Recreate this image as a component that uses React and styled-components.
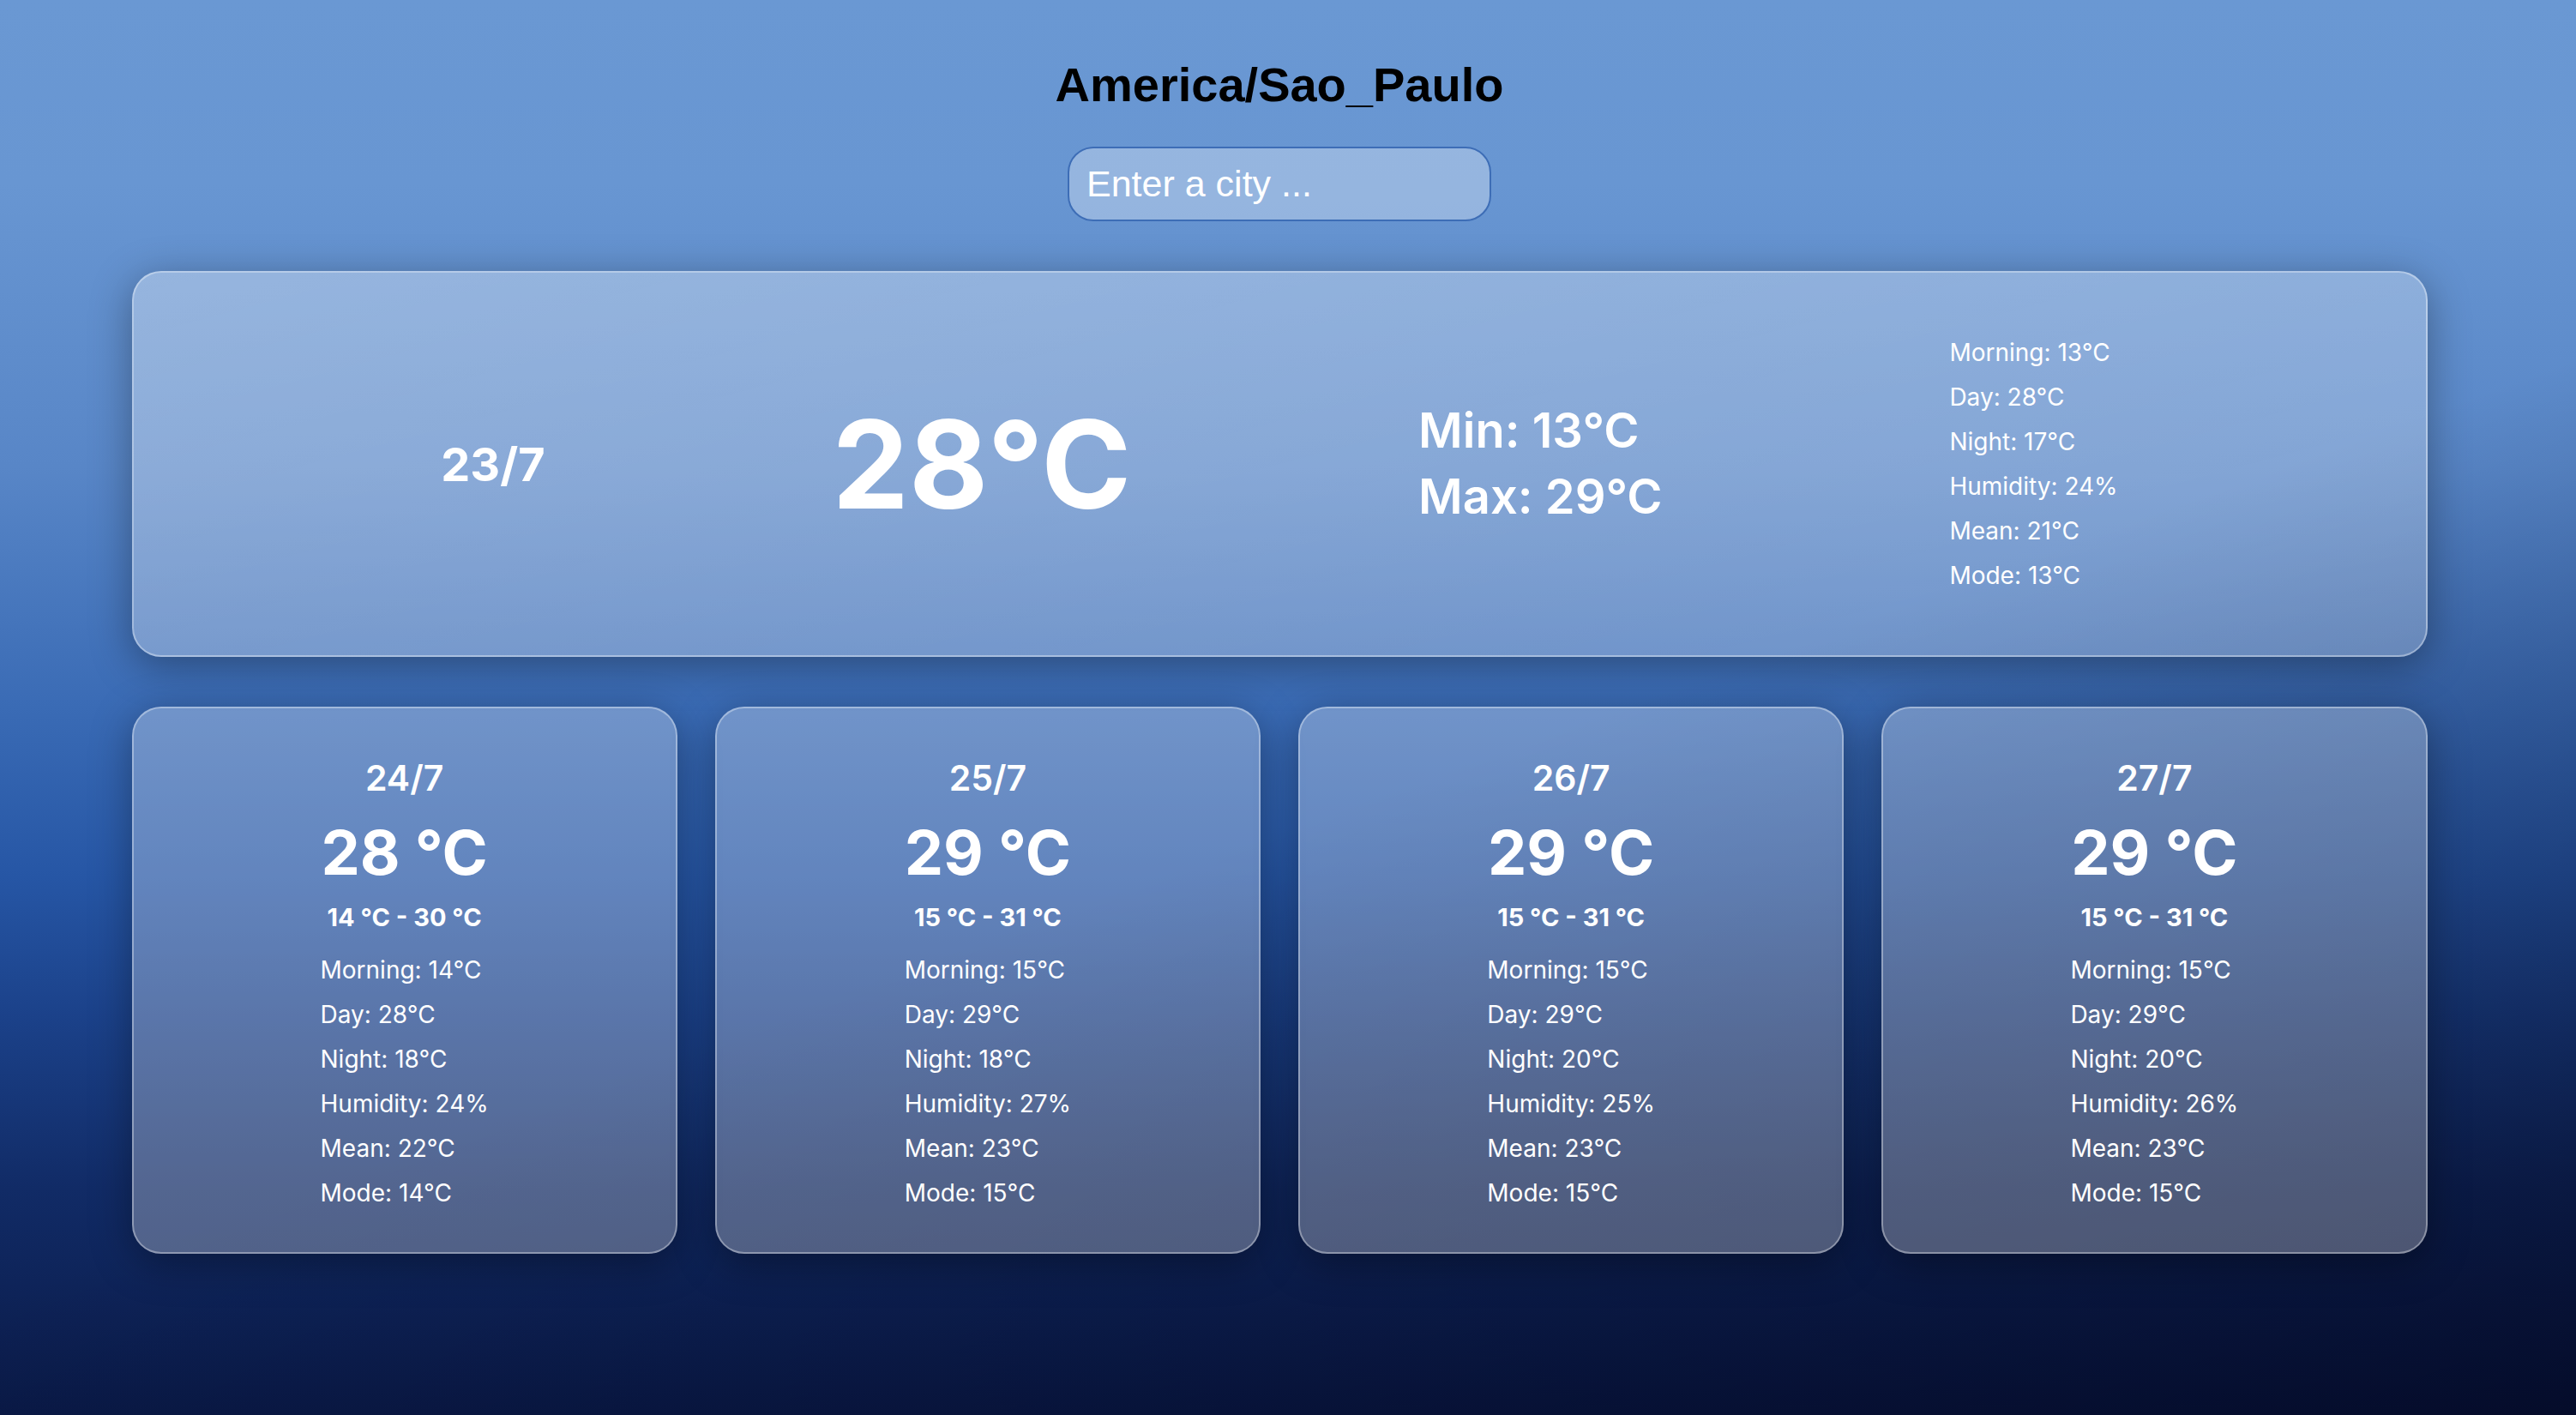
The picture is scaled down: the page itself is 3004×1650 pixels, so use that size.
import React from "react";
import styled, { createGlobalStyle } from "styled-components";

const GlobalStyle = createGlobalStyle`
    html, body {
        margin: 0;
        padding: 0;
    }
    body {
        min-height: 100vh;
        font-family: "Liberation Sans", Arial, sans-serif;
        background:
            linear-gradient(160deg, rgba(0, 0, 0, 0) 55%, rgba(0, 0, 18, 0.55) 100%),
            linear-gradient(180deg, #6a98d3 0%, #6896d2 13%, #5886c7 33%, #3a6bb5 50%, #2656a5 62%, #1b4189 72%, #112b66 84%, #0a1a48 100%);
    }
`;

const Page = styled.div`
    min-height: 100vh;
    padding-right: 20px;
    box-sizing: border-box;
`;

const Content = styled.div`
    width: 2677px;
    margin: 0 auto;
    display: flex;
    flex-direction: column;
    align-items: center;
    padding-bottom: 100px;
`;

const Title = styled.h1`
    margin: 67px 0 0;
    font-size: 56px;
    line-height: 64px;
    font-weight: 700;
    color: #000;
`;

const SearchInput = styled.input`
    margin-top: 40px;
    width: 494px;
    height: 87px;
    box-sizing: border-box;
    padding: 0 20px;
    border: 2px solid #3d6db6;
    border-radius: 30px;
    background: rgba(255, 255, 255, 0.3);
    font-family: "Liberation Sans", Arial, sans-serif;
    font-size: 43px;
    color: #fff;
    outline: none;
    &::placeholder {
        color: #fff;
    }
`;

const Glass = styled.div`
    box-sizing: border-box;
    border: 2px solid rgba(255, 255, 255, 0.35);
    border-radius: 34px;
    background: linear-gradient(165deg, rgba(255, 255, 255, 0.33) 0%, rgba(255, 255, 255, 0.24) 100%);
    box-shadow: 0 10px 48px rgba(0, 0, 0, 0.35);
    color: #fff;
    font-family: Inter, "Noto Sans", sans-serif;
`;

const TodayCard = styled(Glass)`
    margin-top: 58px;
    width: 100%;
    height: 450px;
    padding: 0 24px;
    display: flex;
    align-items: center;
    justify-content: space-evenly;
`;

const TodayDate = styled.div`
    font-size: 54px;
    font-weight: 700;
`;

const TodayTemp = styled.div`
    font-size: 142px;
    font-weight: 700;
    line-height: 1;
`;

const MinMax = styled.div`
    font-size: 56px;
    font-weight: 600;
    line-height: 77px;
`;

const Details = styled.div`
    font-size: 28px;
    line-height: 52px;
    text-align: left;
`;

const Forecast = styled.div`
    margin-top: 58px;
    width: 100%;
    display: grid;
    grid-template-columns: repeat(4, 1fr);
    gap: 44px;
`;

const DayCard = styled(Glass)`
    height: 638px;
    padding-top: 56px;
    display: flex;
    flex-direction: column;
    align-items: center;
    background: rgba(255, 255, 255, 0.28);
`;

const DayDate = styled.div`
    font-size: 41px;
    line-height: 50px;
    font-weight: 600;
`;

const DayTemp = styled.div`
    margin-top: 18px;
    font-size: 72px;
    line-height: 87px;
    font-weight: 700;
`;

const DayRange = styled.div`
    margin-top: 15px;
    font-size: 29px;
    line-height: 35px;
    font-weight: 700;
`;

const DayDetails = styled(Details)`
    margin-top: 18px;
`;

const today = {
    date: "23/7",
    temp: 28,
    min: 13,
    max: 29,
    morning: 13,
    day: 28,
    night: 17,
    humidity: 24,
    mean: 21,
    mode: 13,
};

const days = [
    { date: "24/7", temp: 28, min: 14, max: 30, morning: 14, day: 28, night: 18, humidity: 24, mean: 22, mode: 14 },
    { date: "25/7", temp: 29, min: 15, max: 31, morning: 15, day: 29, night: 18, humidity: 27, mean: 23, mode: 15 },
    { date: "26/7", temp: 29, min: 15, max: 31, morning: 15, day: 29, night: 20, humidity: 25, mean: 23, mode: 15 },
    { date: "27/7", temp: 29, min: 15, max: 31, morning: 15, day: 29, night: 20, humidity: 26, mean: 23, mode: 15 },
];

const DetailLines = ({ item }) => (
    <>
        <div>Morning: {item.morning}°C</div>
        <div>Day: {item.day}°C</div>
        <div>Night: {item.night}°C</div>
        <div>Humidity: {item.humidity}%</div>
        <div>Mean: {item.mean}°C</div>
        <div>Mode: {item.mode}°C</div>
    </>
);

const App = () => {
    return (
        <Page>
            <GlobalStyle />
            <Content>
                <Title>America/Sao_Paulo</Title>
                <SearchInput placeholder="Enter a city ..." />

                <TodayCard>
                    <TodayDate>{today.date}</TodayDate>
                    <TodayTemp>{today.temp}°C</TodayTemp>
                    <MinMax>
                        <div>Min: {today.min}°C</div>
                        <div>Max: {today.max}°C</div>
                    </MinMax>
                    <Details>
                        <DetailLines item={today} />
                    </Details>
                </TodayCard>

                <Forecast>
                    {days.map((item) => (
                        <DayCard key={item.date}>
                            <DayDate>{item.date}</DayDate>
                            <DayTemp>{item.temp} °C</DayTemp>
                            <DayRange>
                                {item.min} °C - {item.max} °C
                            </DayRange>
                            <DayDetails>
                                <DetailLines item={item} />
                            </DayDetails>
                        </DayCard>
                    ))}
                </Forecast>
            </Content>
        </Page>
    );
};

export default App;
